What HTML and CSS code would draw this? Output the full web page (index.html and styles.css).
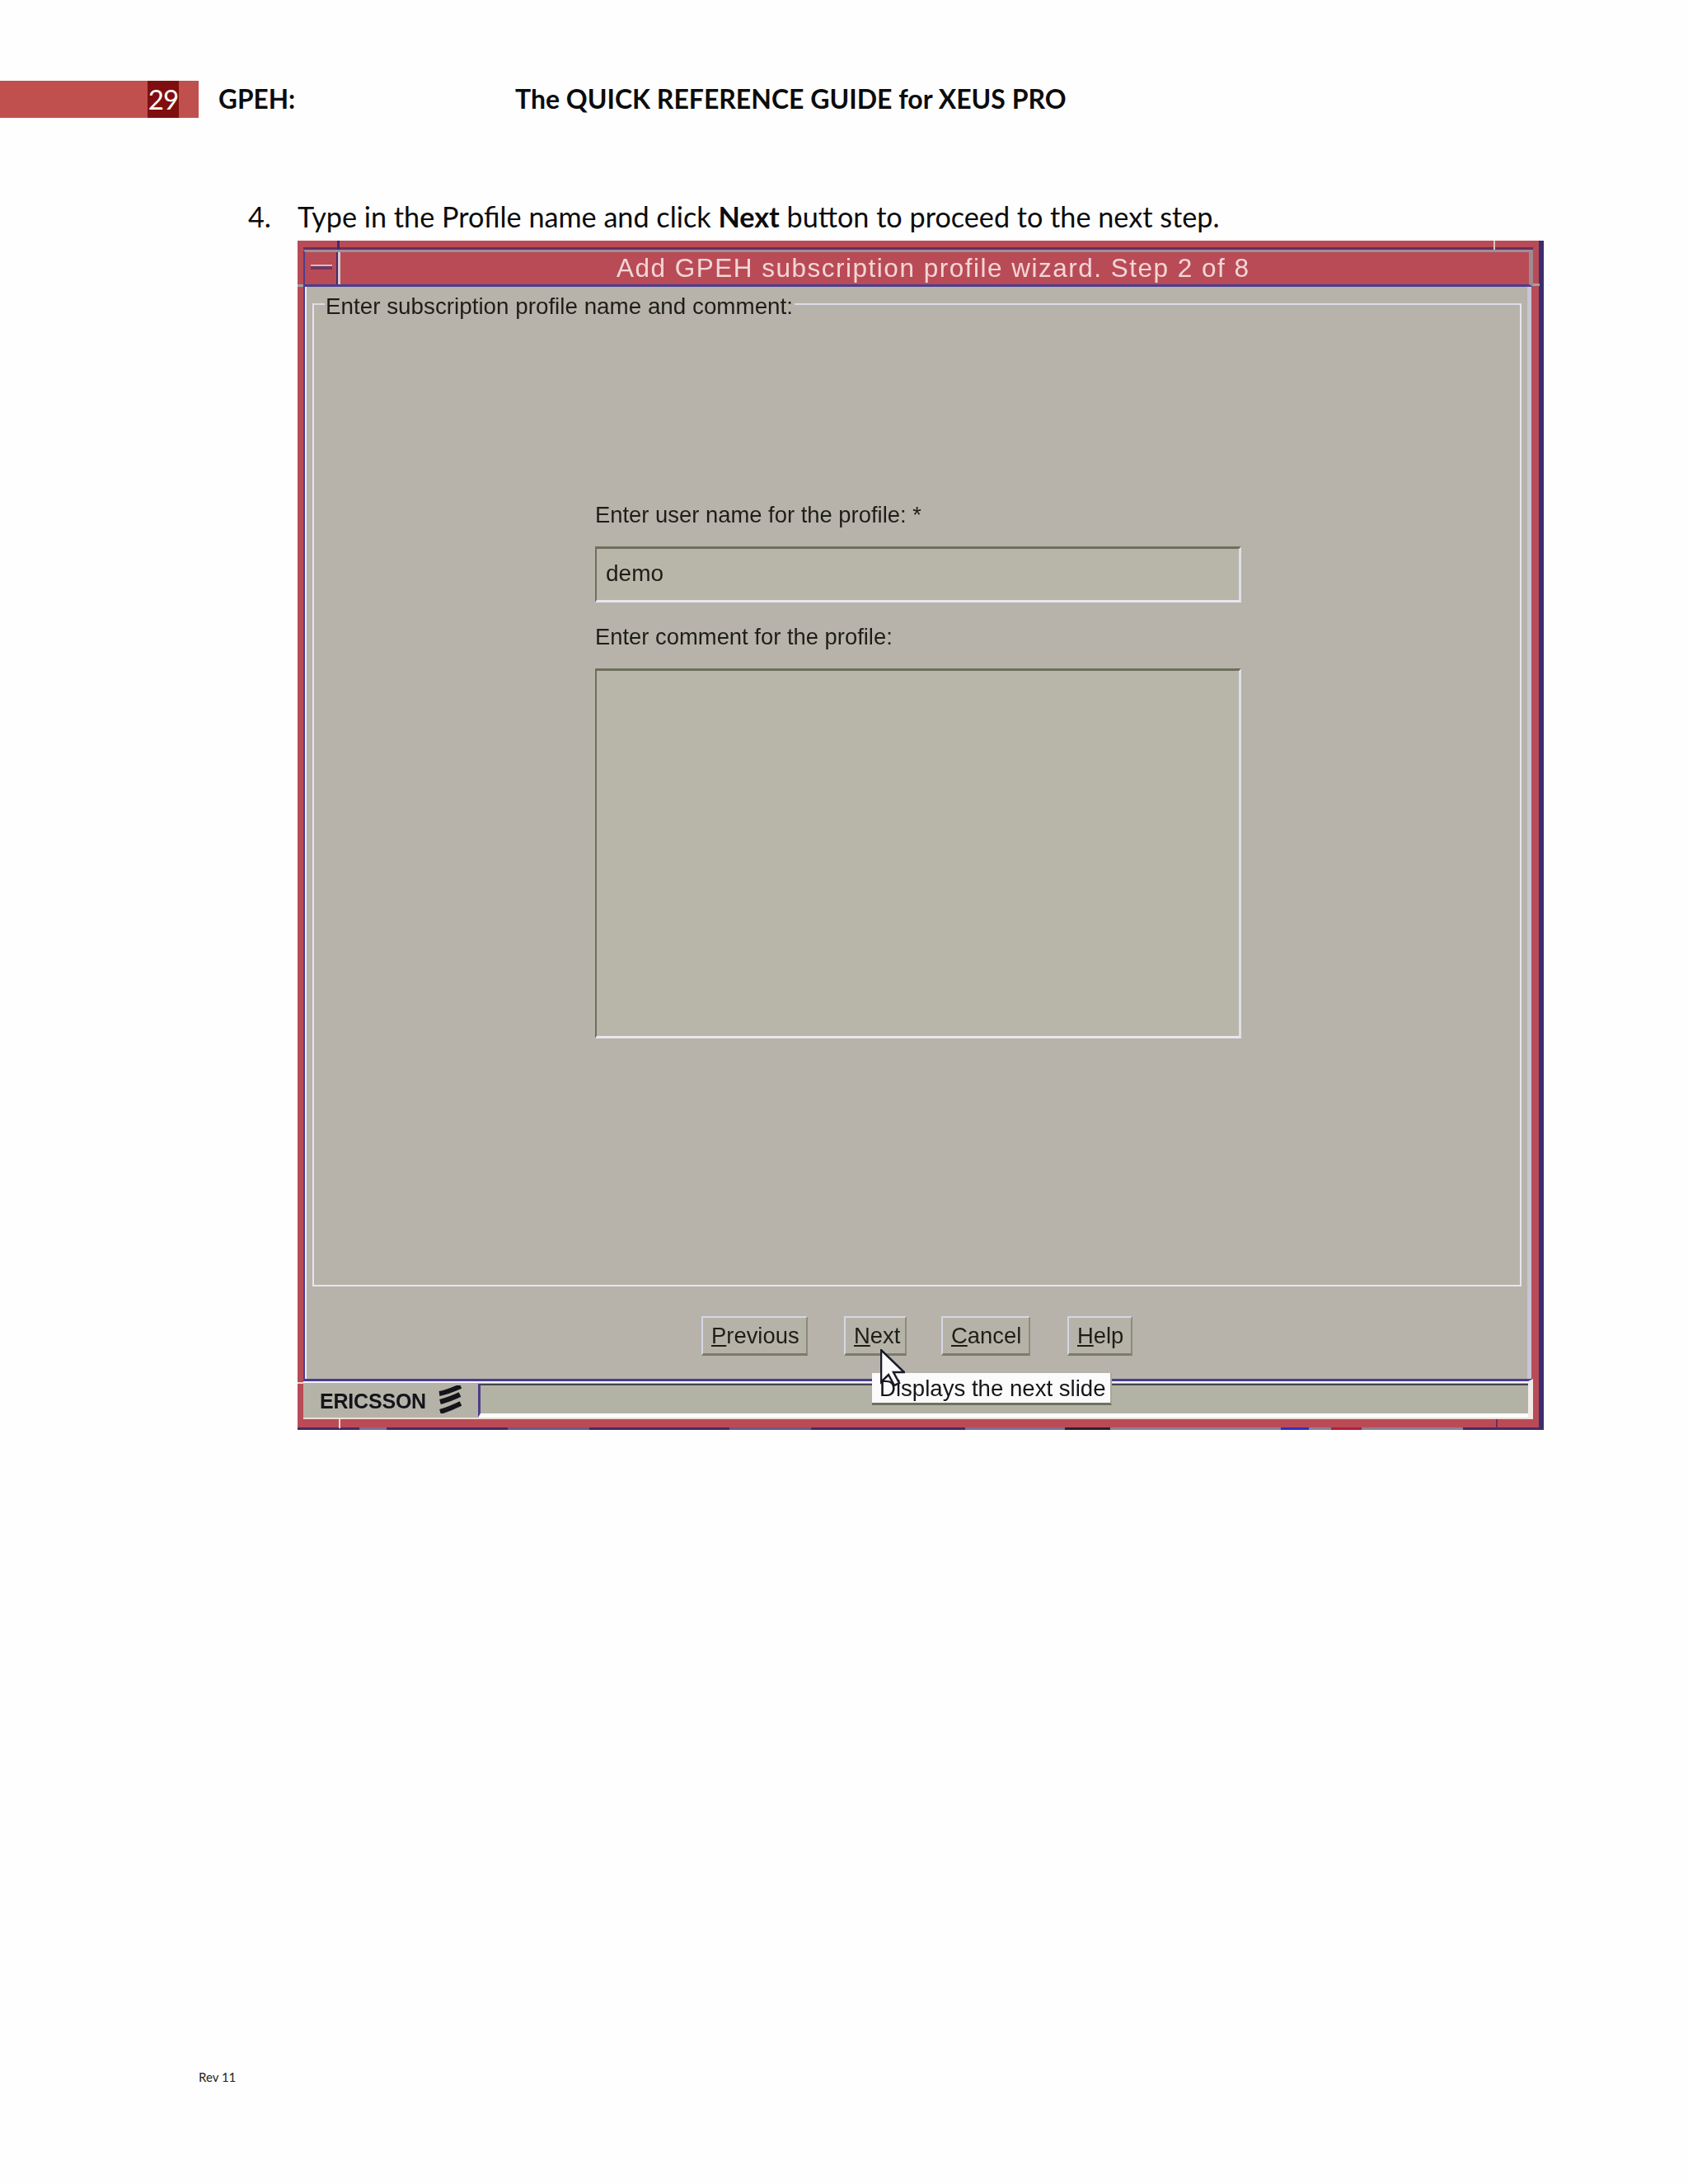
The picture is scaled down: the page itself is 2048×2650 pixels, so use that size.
FILE: index.html
```html
<!DOCTYPE html>
<html lang="en">
<head>
<meta charset="utf-8">
<title>GPEH: The Quick Reference Guide for XEUS PRO</title>
<link rel="stylesheet" href="styles.css">
</head>
<body>
<header class="page-header">
  <div class="band"><span class="page-num">29</span></div>
  <div class="chapter">GPEH:</div>
  <div class="doc-title">The QUICK REFERENCE GUIDE for XEUS PRO</div>
</header>
<p class="step"><span class="step-num">4.</span><span>Type in the Profile name and click <b>Next</b> button to proceed to the next step.</span></p>
<div class="dialog">
  <span class="tick tick-top"></span>
  <span class="tick tick-left"></span>
  <span class="tick tick-notch-l"></span>
  <span class="tick tick-notch-r"></span>
  <span class="tick tick-status"></span>
  <span class="tick tick-bottom-l"></span>
  <span class="tick tick-bottom-r"></span>
  <div class="frame">
    <div class="titlebar">
      <div class="menu-btn"><span class="dash"></span></div>
      <div class="title-text">Add GPEH subscription profile wizard. Step 2 of 8</div>
    </div>
    <div class="body">
      <div class="group">
        <span class="legend">Enter subscription profile name and comment:</span>
        <div class="form">
          <div class="label label-name">Enter user name for the profile: *</div>
          <div class="field field-name">demo</div>
          <div class="label label-comment">Enter comment for the profile:</div>
          <div class="field field-comment"></div>
        </div>
      </div>
      <div class="buttons">
        <div class="btn btn-prev"><u>P</u>revious</div>
        <div class="btn btn-next"><u>N</u>ext</div>
        <div class="btn btn-cancel"><u>C</u>ancel</div>
        <div class="btn btn-help"><u>H</u>elp</div>
      </div>
    </div>
    <div class="status">
      <div class="brand">
        <span class="brand-name">ERICSSON</span>
        <svg class="brand-mark" viewBox="0 0 28 34" width="28" height="34" aria-hidden="true">
          <path d="M1 10 C8 9 18 5 27 1" />
          <path d="M2 20 C9 18 18 15 26 11" />
          <path d="M2 32 C9 30 19 26 27 22" />
        </svg>
      </div>
      <div class="status-field"></div>
    </div>
  </div>
  <div class="taskstrip"></div>
  <div class="tooltip">
    <svg class="cursor" viewBox="0 0 30 46" width="30" height="46" aria-hidden="true">
      <path d="M1 1 L1 40 L10 31 L17 44 L23 41 L16 28 L29 28 Z" />
    </svg>
    <span class="tip-text">Displays the next slide</span>
  </div>
</div>
<footer class="rev">Rev 11</footer>
</body>
</html>
```
FILE: styles.css
```css
* { box-sizing: border-box; }
html, body { margin: 0; padding: 0; }
body {
  width: 2048px;
  height: 2650px;
  background: #fefefe;
  color: #0c0c0c;
  font-family: "Lato", "Liberation Sans", sans-serif;
  overflow: hidden;
}
.page-header {
  display: flex;
  align-items: center;
  margin-top: 98px;
  height: 45px;
  position: relative;
}
.band {
  width: 241px;
  height: 45px;
  background: #c0504d;
  padding-left: 179px;
}
.page-num {
  display: block;
  width: 38px;
  height: 45px;
  background: #7f0f0f;
  color: #fff;
  font-size: 33px;
  line-height: 45px;
  text-align: center;
  letter-spacing: -1px;
}
.chapter {
  margin-left: 24px;
  width: 360px;
  padding-bottom: 2px;
  font-weight: 700;
  font-size: 31.6px;
}
.doc-title {
  padding-bottom: 2px;
  font-weight: 700;
  font-size: 32px;
  white-space: nowrap;
}
.step {
  display: flex;
  margin: 94px 0 0 301px;
  height: 55px;
  font-size: 34.2px;
  line-height: 52px;
}
.step-num { width: 60px; }
.step b { font-weight: 700; }

/* dialog screenshot */
.dialog {
  position: relative;
  margin-left: 361px;
  width: 1512px;
  height: 1443px;
  background: #b94b57;
  padding: 11px 7px 0 7px;
  border-right: 6px solid #3c2d6c;
  color: #1e1e18;
  font-family: "Liberation Sans", Arial, sans-serif;
  filter: blur(0.7px);
}
.tick {
  position: absolute;
  background: #d8c8b8;
}
.tick-top { left: 1451px; top: 0; width: 2px; height: 11px; }
.tick-left { left: 48px; top: 0; width: 3px; height: 11px; background: #3c2d6c; }
.tick-notch-l { left: 0; top: 53px; width: 7px; height: 3px; background: #a99ea4; }
.tick-notch-r { left: 1499px; top: 52px; width: 8px; height: 3px; background: #a99ea4; }
.tick-status { left: 0; top: 1385px; width: 7px; height: 2px; background: #ecd2ca; }
.tick-bottom-l { left: 50px; top: 1430px; width: 2px; height: 11px; background: #ecd9d2; }
.tick-bottom-r { left: 1454px; top: 1430px; width: 2px; height: 11px; background: #6a2e5c; }
.frame {
  height: 1419px;
  display: flex;
  flex-direction: column;
  box-shadow: 0 -3px 0 #6a2e5c;
}
.titlebar {
  height: 45px;
  flex: none;
  display: flex;
  border-top: 3px solid #a08f96;
  border-bottom: 3px solid #4b3d8e;
  border-right: 5px solid #9d8a92;
  border-left: 2px solid #4b3d8e;
}
.menu-btn {
  width: 43px;
  flex: none;
  display: flex;
  align-items: center;
  justify-content: center;
  border-right: 3px solid #d9c8cc;
  box-shadow: -2px 0 0 #3c2d6c inset;
}
.dash {
  width: 26px;
  height: 6px;
  margin-top: -4px;
  background: #6e3760;
  border-top: 2px solid #ddb9bd;
}
.title-text {
  margin-left: 335px;
  font-size: 31.5px;
  line-height: 39px;
  letter-spacing: 1.5px;
  color: #f3d6d6;
  white-space: nowrap;
}
.body {
  flex: none;
  height: 1325px;
  background: #b7b3aa;
  margin-right: 2px;
  border-left: 2px solid #4b3d8e;
  border-right: 5px solid #c6c6d4;
  box-shadow: inset 2px 0 0 #efeef5;
  padding: 20px 7px 0 9px;
}
.group {
  position: relative;
  height: 1193px;
  border: 2px solid #e6e5ee;
  border-top-color: #dcdbe4;
  padding: 0 0 0 341px;
}
.legend {
  position: absolute;
  left: 13px;
  top: -11px;
  padding: 0 2px 0 1px;
  background: #b7b3aa;
  font-size: 27.8px;
  line-height: 26px;
  white-space: nowrap;
}
.form { width: 784px; }
.label {
  height: 30px;
  font-size: 27.4px;
  line-height: 30px;
  white-space: nowrap;
}
.label-name { margin-top: 240px; }
.label-comment { margin-top: 27px; }
.field {
  background: #b7b6a9;
  border-style: solid;
  border-width: 3px 3px 3px 2px;
  border-color: #6f6f5c #dfdee8 #e8e7f0 #6f6f5c;
}
.field-name {
  height: 68px;
  margin-top: 23px;
  padding-left: 11px;
  font-size: 28px;
  line-height: 60px;
}
.field-comment {
  height: 449px;
  margin-top: 23px;
}
.buttons {
  display: flex;
  padding: 36px 0 0 472px;
  gap: 44px;
}
.btn {
  height: 48px;
  padding-left: 10px;
  border-style: solid;
  border-width: 2px 2px 3px 2px;
  border-color: #d6d6e6 #8c8c7a #7c7c68 #d6d6e6;
  background: #b5b3a7;
  font-size: 27.4px;
  line-height: 44px;
  white-space: nowrap;
}
.btn-prev { width: 129px; }
.btn-next { width: 76px; }
.btn-cancel { width: 108px; margin-left: -2px; }
.btn-help { width: 79px; margin-left: 1px; }
.status {
  flex: none;
  height: 49px;
  display: flex;
  background: #b5b3a8;
  border-top: 3px solid #4b3d8e;
  border-right: 6px solid #f1ece8;
  border-bottom: 2px solid #f4dcd4;
  position: relative;
}
.status::before {
  content: "";
  position: absolute;
  left: 0;
  right: 0;
  top: 0;
  height: 2px;
  background: #f4f3f8;
}
.brand {
  width: 212px;
  flex: none;
  display: flex;
  align-items: center;
  padding: 4px 0 0 17px;
  border-left: 3px solid #b5b3a8;
}
.brand-name {
  font-weight: 700;
  font-size: 25px;
  letter-spacing: -0.2px;
  color: #14141a;
}
.brand-mark { margin: -5px 0 0 15px; flex: none; }
.brand-mark path {
  fill: none;
  stroke: #14141a;
  stroke-width: 6;
}
.status-field {
  flex: 1;
  margin-top: 3px;
  background: #b3b3a5;
  border-style: solid;
  border-width: 2px 0 5px 3px;
  border-color: #45454f #fff #fff #4b3d8e;
}
.taskstrip {
  margin: 10px -7px 0 -7px;
  height: 3px;
  background: linear-gradient(90deg,
    #4b2a62 0, #4b2a62 5%, #7d6f95 5%, #7d6f95 7.2%, #4b2a62 7.2%, #4b2a62 16.9%,
    #6a5a88 16.9%, #6a5a88 23.5%, #4b2a62 23.5%, #4b2a62 34.8%,
    #6a5a88 34.8%, #6a5a88 41.4%, #4b2a62 41.4%, #4b2a62 53.8%,
    #7c7197 53.8%, #7c7197 61.8%, #33202a 61.8%, #33202a 65.5%, #8d8298 65.5%, #8d8298 79.2%,
    #3030c0 79.2%, #3030c0 81.5%, #8d8298 81.5%, #8d8298 83.3%, #b02038 83.3%, #b02038 85.7%,
    #8d8298 85.7%, #8d8298 93.9%, #4b2a62 93.9%, #4b2a62 100%);
}
.tooltip {
  position: absolute;
  left: 697px;
  top: 1374px;
  width: 291px;
  height: 39px;
  padding-left: 9px;
  background: #fbfbfb;
  border-right: 2px solid #a8a89a;
  border-bottom: 3px solid #70705e;
  font-size: 27.6px;
  line-height: 38px;
  color: #16161a;
  white-space: nowrap;
}
.cursor {
  position: absolute;
  left: 10px;
  top: -29px;
}
.cursor path {
  fill: #fbfbfb;
  stroke: #1a1a2a;
  stroke-width: 2.5;
}
.tip-text { position: relative; }
.rev {
  margin: 775px 0 0 241px;
  font-size: 15px;
  line-height: 20px;
  color: #222;
}
```
